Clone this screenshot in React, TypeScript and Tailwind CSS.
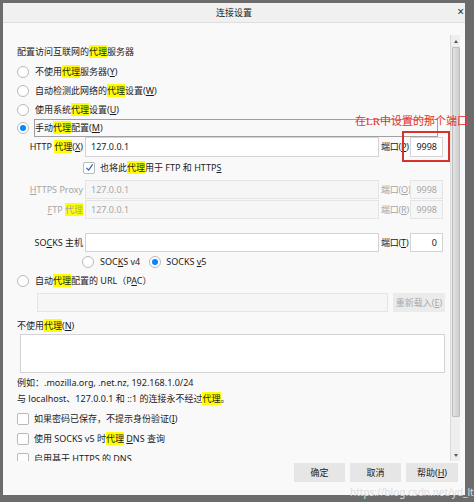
import React from 'react';

const HL = ({ children }: { children: React.ReactNode }) => (
  <span className="bg-[#ffff00]">{children}</span>
);

const U = ({ children }: { children: React.ReactNode }) => <span className="underline">{children}</span>;

function Radio({ checked = false }: { checked?: boolean }) {
  return (
    <span className="w-[12px] h-[12px] rounded-full border border-[#b9b9bb] bg-white flex items-center justify-center shrink-0">
      {checked && <span className="w-[6px] h-[6px] rounded-full bg-[#0a84ff]" />}
    </span>
  );
}

function Checkbox({ checked = false }: { checked?: boolean }) {
  return (
    <span className="w-[12px] h-[12px] rounded-[2px] border border-[#b9b9bb] bg-white flex items-center justify-center shrink-0">
      {checked && (
        <svg width="9" height="9" viewBox="0 0 10 10" fill="none" stroke="#2d5fb0" strokeWidth="1.3">
          <path d="M1.5 5.5 L4 8 L8.5 1.5" />
        </svg>
      )}
    </span>
  );
}

function Field({ value = '', disabled = false, right = false, className = '' }: { value?: string; disabled?: boolean; right?: boolean; className?: string }) {
  return (
    <div
      className={`h-full border flex items-center px-[5px] ${right ? 'justify-end' : ''} ${
        disabled ? 'bg-[#f6f6f7] border-[#e4e4e6] text-[#a8a8a8]' : 'bg-white border-[#d3d3d5] text-[#222]'
      } ${className}`}
    >
      {value}
    </div>
  );
}

function ProxyRow({ label, value, port, portLabel, disabled = false, className = '' }: { label: React.ReactNode; value: string; port: string; portLabel: React.ReactNode; disabled?: boolean; className?: string }) {
  return (
    <div className={`flex items-center ${className}`}>
      <div className={`w-[66px] text-right shrink-0 whitespace-nowrap ${disabled ? 'text-[#a5a5a5]' : ''}`}>{label}</div>
      <Field value={value} disabled={disabled} className="ml-[2px] flex-1" />
      <div className={`w-[31px] pl-[2px] shrink-0 whitespace-nowrap tracking-[-0.2px] ${disabled ? 'text-[#a5a5a5]' : ''}`}>{portLabel}</div>
      <Field value={port} disabled={disabled} right className="w-[33px] mr-[2px] shrink-0" />
    </div>
  );
}

export default function App() {
  return (
    <div className="relative w-[474px] h-[502px] bg-[#6c6c6c] pl-[3px] pt-[3px] overflow-hidden font-['Noto_Sans','Noto_Sans_CJK_SC',sans-serif] text-[9px] leading-[12px] text-[#1b1b1b]">
      <div className="w-[462px] h-[492px] bg-[#f9f9fa] flex flex-col">
        {/* title bar */}
        <div className="h-[20px] shrink-0 bg-[#f0f0f0] border-b border-[#dedede] relative flex items-center justify-center">
          <span className="text-[#222]">连接设置</span>
          <span className="absolute right-[1px] top-[3px] text-[12px] leading-[12px] text-[#333]">×</span>
        </div>

        <div className="h-[438px] shrink-0 flex">
          {/* scrolling content */}
          <div className="flex-1 overflow-hidden pl-[14px] pr-[5px] pt-[23px]">
            <div className="h-[12px]">
              配置访问互联网的<HL>代理</HL>服务器
            </div>
            <div className="mt-[4px] h-[19px] flex items-center gap-[6px]">
              <Radio />
              <span>不使用<HL>代理</HL>服务器(<U>Y</U>)</span>
            </div>
            <div className="h-[19px] flex items-center gap-[6px]">
              <Radio />
              <span>自动检测此网络的<HL>代理</HL>设置(<U>W</U>)</span>
            </div>
            <div className="h-[19px] flex items-center gap-[6px]">
              <Radio />
              <span>使用系统<HL>代理</HL>设置(<U>U</U>)</span>
            </div>
            <div className="h-[18px] flex items-center">
              <Radio checked />
              <div className="ml-[5px] mr-[7px] flex-1 h-[18px] border border-[#a0a0a0] flex items-center">
                <span>手动<HL>代理</HL>配置(<U>M</U>)</span>
              </div>
            </div>

            <ProxyRow
              className="h-[20px]"
              label={<>HTTP <HL>代理</HL>(<U>X</U>)</>}
              value="127.0.0.1"
              portLabel={<>端口(<U>P</U>)</>}
              port="9998"
            />
            <div className="h-[21px] flex items-center">
              <div className="ml-[66px]">
                <Checkbox checked />
              </div>
              <span className="ml-[5px]">
                也将此<HL>代理</HL>用于 FTP 和 HTTP<U>S</U>
              </span>
            </div>
            <ProxyRow
              className="mt-[2px] h-[19px]"
              disabled
              label={<><U>H</U>TTPS Proxy</>}
              value="127.0.0.1"
              portLabel={<>端口(<U>O</U>)</>}
              port="9998"
            />
            <ProxyRow
              className="mt-[1px] h-[19px]"
              disabled
              label={<><U>F</U>TP <HL>代理</HL></>}
              value="127.0.0.1"
              portLabel={<>端口(<U>R</U>)</>}
              port="9998"
            />
            <ProxyRow
              className="mt-[14px] h-[19px]"
              label={<>SO<U>C</U>KS 主机</>}
              value=""
              portLabel={<>端口(<U>T</U>)</>}
              port="0"
            />
            <div className="h-[19px] flex items-center">
              <div className="ml-[65px]">
                <Radio />
              </div>
              <span className="ml-[6px]">SOC<U>K</U>S v4</span>
              <div className="ml-[9px]">
                <Radio checked />
              </div>
              <span className="ml-[5px]">SOCKS <U>v</U>5</span>
            </div>
            <div className="h-[20px] flex items-center gap-[6px]">
              <Radio />
              <span>自动<HL>代理</HL>配置的 URL（P<U>A</U>C）</span>
            </div>
            <div className="mt-[2px] h-[19px] flex items-stretch ml-[20px]">
              <Field disabled className="flex-1" />
              <div className="ml-[5px] w-[52px] bg-[#ebebeb] text-[#a9a9a9] flex items-center justify-center">
                重新载入(<U>E</U>)
              </div>
            </div>
            <div className="mt-[8px] h-[12px]">
              不使用<HL>代理</HL>(<U>N</U>)
            </div>
            <div className="mt-[2px] ml-[3px] h-[39px] bg-white border border-[#d3d3d5]" />
            <div className="mt-[4px] h-[12px]">例如：.mozilla.org, .net.nz, 192.168.1.0/24</div>
            <div className="mt-[4px] h-[12px]">
              与 localhost、127.0.0.1 和 ::1 的连接永不经过<HL>代理</HL>。
            </div>
            <div className="mt-[7px] h-[14px] flex items-center gap-[5px]">
              <Checkbox />
              <span>如果密码已保存，不提示身份验证(<U>I</U>)</span>
            </div>
            <div className="mt-[6px] h-[14px] flex items-center gap-[5px]">
              <Checkbox />
              <span>
                使用 SOCKS v5 时<HL>代理</HL> <U>D</U>NS 查询
              </span>
            </div>
            <div className="mt-[6px] h-[14px] flex items-center gap-[5px]">
              <Checkbox />
              <span>启用基于 HTTPS 的 DNS</span>
            </div>
          </div>

          {/* scrollbar */}
          <div className="w-[10px] mt-[12px] mr-[5px] bg-[#eeeeee] border-l border-[#dadada] flex flex-col items-center">
            <div className="h-[12px] w-full flex items-center justify-center">
              <svg width="4" height="3" viewBox="0 0 4 3">
                <path d="M0 3 L2 0 L4 3 Z" fill="#555" />
              </svg>
            </div>
            <div className="w-[8px] h-[370px] rounded-[1px] border border-[#bdbdbd] bg-gradient-to-r from-[#e4e4e4] to-[#cdcdcd]" />
            <div className="flex-1" />
            <div className="h-[12px] w-full flex items-center justify-center">
              <svg width="4" height="3" viewBox="0 0 4 3">
                <path d="M0 0 L2 3 L4 0 Z" fill="#555" />
              </svg>
            </div>
          </div>
        </div>

        {/* footer buttons */}
        <div className="flex-1 flex justify-end items-start pt-[2px] pr-[7px] gap-[5px]">
          <div className="w-[51px] h-[19px] bg-[#e6e6e7] flex items-center justify-center">确定</div>
          <div className="w-[51px] h-[19px] bg-[#e6e6e7] flex items-center justify-center">取消</div>
          <div className="w-[52px] h-[19px] bg-[#e6e6e7] flex items-center justify-center">
            帮助(<U>H</U>)
          </div>
        </div>
      </div>

      {/* annotation overlay */}
      <div className="absolute left-[355px] top-[115px] font-['Liberation_Serif','Noto_Sans_CJK_SC',serif] text-[11px] leading-[13px] text-[#e4312b] whitespace-nowrap">
        在LR中设置的那个端口
      </div>
      <div className="absolute left-[402px] top-[131px] w-[48px] h-[31px] border-2 border-[#d8322c]" />

      {/* watermark */}
      <div className="absolute left-[350px] top-[486px] text-[10px] leading-[12px] text-[#dcdcdc] whitespace-nowrap">
        https://blog.csdn.net/yd_ltau
      </div>
    </div>
  );
}
